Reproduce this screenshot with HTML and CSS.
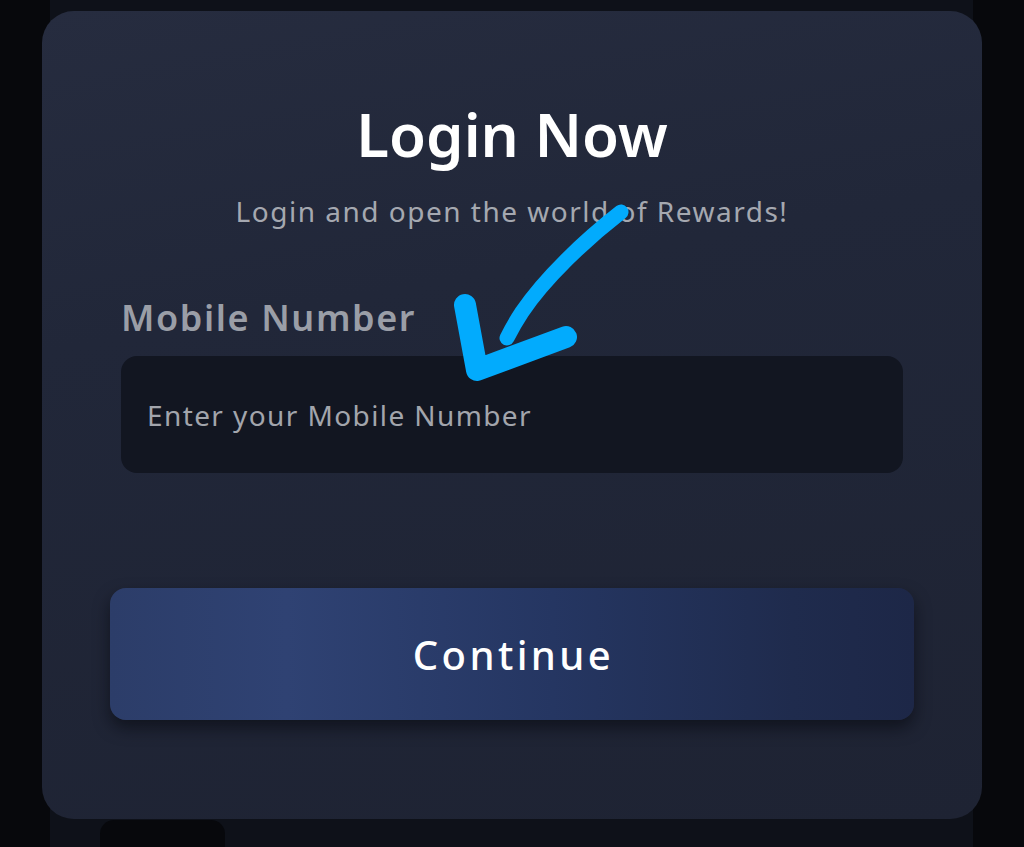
FILE: index.html
```html
<!DOCTYPE html>
<html lang="en">
<head>
<meta charset="utf-8">
<title>Login Now</title>
<link rel="stylesheet" href="styles.css">
</head>
<body>
<div class="page">
  <div class="backdrop">
    <div class="card">
      <h1 class="title">Login Now</h1>
      <p class="subtitle">Login and open the world of Rewards!</p>
      <label class="label" for="mobile">Mobile Number</label>
      <div class="input-box">
        <input id="mobile" class="input" type="tel" placeholder="Enter your Mobile Number">
      </div>
      <button class="btn" type="button">Continue</button>
    </div>
    <div class="tab"></div>
  </div>
  <svg class="arrow" width="1024" height="847" viewBox="0 0 1024 847" aria-hidden="true">
    <path d="M621 212 C 585 240, 545 278, 522 312 C 514 324, 510 332, 507 338" fill="none" stroke="#02abfd" stroke-width="15" stroke-linecap="round" stroke-linejoin="round"/>
    <path d="M465 305 L477 370 L566 337" fill="none" stroke="#02abfd" stroke-width="22" stroke-linecap="round" stroke-linejoin="round"/>
  </svg>
</div>
</body>
</html>
```

FILE: styles.css
```css
html, body {
  margin: 0;
  padding: 0;
  background: #07080c;
}
body {
  font-family: "Noto Sans", "Open Sans", sans-serif;
  width: 1024px;
  height: 847px;
  overflow: hidden;
}
.page {
  position: relative;
  width: 1024px;
  height: 847px;
}
.backdrop {
  margin: 0 51px 0 50px;
  height: 847px;
  background: #0e1119;
  display: flex;
  flex-direction: column;
}
.card {
  flex-shrink: 0;
  margin: 11px -9px 0 -8px;
  height: 808px;
  box-sizing: border-box;
  border-radius: 32px;
  background: linear-gradient(170deg, #262c3f 0%, #212739 35%, #1e2333 100%);
  display: flex;
  flex-direction: column;
  padding: 0 79px;
}
.title {
  margin: 88px 0 0;
  text-align: center;
  color: #ffffff;
  font-size: 60px;
  font-weight: 600;
  line-height: 70px;
}
.subtitle {
  margin: 25px 0 0;
  text-align: center;
  color: #a5a8b0;
  font-size: 28px;
  line-height: 34px;
  letter-spacing: 1.5px;
}
.label {
  margin-top: 67px;
  color: #9a9ea7;
  font-size: 36px;
  font-weight: 600;
  line-height: 46px;
  letter-spacing: 1.6px;
}
.input-box {
  margin-top: 15px;
  height: 117px;
  flex-shrink: 0;
  border-radius: 16px;
  background: #121621;
  display: flex;
  align-items: center;
  padding: 0 26px;
}
.input {
  flex: 1;
  border: 0;
  outline: 0;
  background: transparent;
  font-family: inherit;
  font-size: 28px;
  letter-spacing: 1.4px;
  color: #ffffff;
  padding: 0;
}
.input::placeholder {
  color: #a2a5ac;
}
.btn {
  flex-shrink: 0;
  margin: 115px -11px 0;
  height: 132px;
  border: 0;
  border-radius: 16px;
  background: linear-gradient(90deg, #2c3d69 0%, #2f4273 22%, #253662 55%, #1f2b4d 85%, #1d2747 100%);
  box-shadow: 0 8px 16px rgba(5, 7, 12, 0.55);
  color: #ffffff;
  font-family: inherit;
  font-size: 40px;
  font-weight: 500;
  letter-spacing: 3.4px;
  padding: 0 0 0 3px;
}
.tab {
  flex-shrink: 0;
  margin: 1px 0 0 50px;
  width: 125px;
  height: 40px;
  border-radius: 14px;
  background: #07080c;
}
.arrow {
  position: absolute;
  left: 0;
  top: 0;
  pointer-events: none;
}
```
